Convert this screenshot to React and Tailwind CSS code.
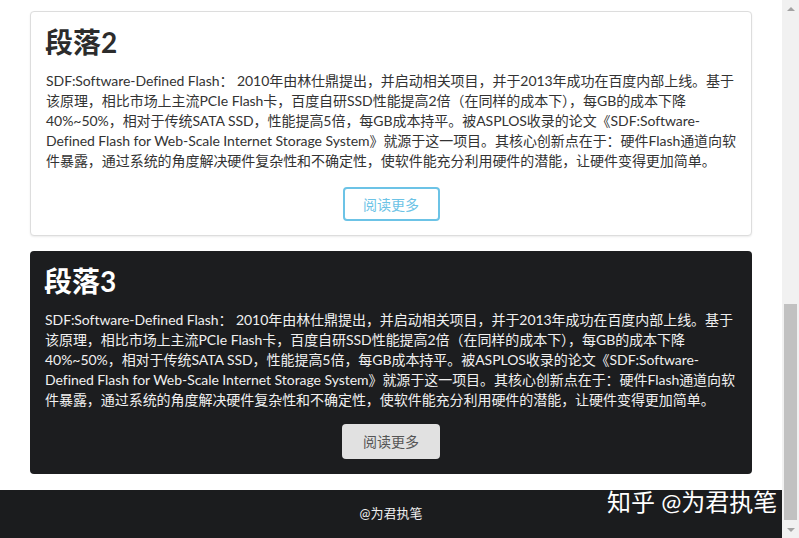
import React from "react";

const LINES = [
  "SDF:Software-Defined Flash： 2010年由林仕鼎提出，并启动相关项目，并于2013年成功在百度内部上线。基于",
  "该原理，相比市场上主流PCIe Flash卡，百度自研SSD性能提高2倍（在同样的成本下），每GB的成本下降",
  "40%~50%，相对于传统SATA SSD，性能提高5倍，每GB成本持平。被ASPLOS收录的论文《SDF:Software-",
  "Defined Flash for Web-Scale Internet Storage System》就源于这一项目。其核心创新点在于：硬件Flash通道向软",
  "件暴露，通过系统的角度解决硬件复杂性和不确定性，使软件能充分利用硬件的潜能，让硬件变得更加简单。",
];

function Section({ title, dark }) {
  return (
    <div
      className={`min-w-0 rounded-[4px] px-[15px] pt-[12px] ${
        dark
          ? "bg-[#1c1d1f] text-[#f0f0f0] pb-[15px]"
          : "bg-white border border-[#dddddd] shadow-[0_1px_2px_rgba(0,0,0,0.08)] text-[#333333] pb-[14px]"
      }`}
    >
      <h2
        className={`-ml-[1px] text-[28px] leading-[36px] font-bold ${
          dark ? "text-white" : "text-[#2c2c2c]"
        }`}
      >
        {title}
      </h2>
      <p className="mt-[11px] text-[14px] leading-[20px] tracking-[-0.05px]">
        {LINES.map((line, i) => (
          <span key={i} className="block whitespace-nowrap">
            {line}
          </span>
        ))}
      </p>
      {dark ? (
        <div className="flex justify-center mt-[14px]">
          <button className="w-[98px] h-[35px] rounded-[4px] bg-[#e1e1e1] text-[#555555] text-[14px]">
            阅读更多
          </button>
        </div>
      ) : (
        <div className="flex justify-center mt-[16px]">
          <button className="w-[97px] h-[34px] rounded-[4px] border-2 border-[#6cc3e6] bg-white text-[#6cc3e6] text-[14px]">
            阅读更多
          </button>
        </div>
      )}
    </div>
  );
}

export default function App() {
  return (
    <div
      className="relative flex h-[538px] w-[799px] overflow-hidden bg-white"
      style={{ fontFamily: "Lato, 'Noto Sans CJK SC', sans-serif" }}
    >
      {/* PAGE */}
      <div className="flex-1 min-w-0 flex flex-col">
        <div className="px-[30px] pt-[11px] flex flex-col gap-[15px]">
          <Section title="段落2" />
          <Section title="段落3" dark />
        </div>
        <div className="mt-auto h-[48px] bg-[#1b1c1e] flex items-center justify-center">
          <span className="text-[13px] text-[#eeeeee]">@为君执笔</span>
        </div>
      </div>

      {/* SCROLLBAR */}
      <div className="w-[17px] shrink-0 bg-[#f1f1f1] flex flex-col items-center">
        <div className="h-[17px] flex items-center justify-center">
          <div className="w-0 h-0 border-l-[4px] border-r-[4px] border-b-[4px] border-l-transparent border-r-transparent border-b-[#a3a3a3]" />
        </div>
        <div className="mt-[287px] w-[13px] h-[216px] bg-[#c1c1c1]" />
        <div className="mt-auto h-[17px] flex items-center justify-center">
          <div className="w-0 h-0 border-l-[4px] border-r-[4px] border-t-[4px] border-l-transparent border-r-transparent border-t-[#a3a3a3]" />
        </div>
      </div>

      {/* WATERMARK */}
      <div className="absolute left-[607px] top-[486px] text-[24px] leading-[32px] text-white whitespace-nowrap">
        知乎 @为君执笔
      </div>
    </div>
  );
}
